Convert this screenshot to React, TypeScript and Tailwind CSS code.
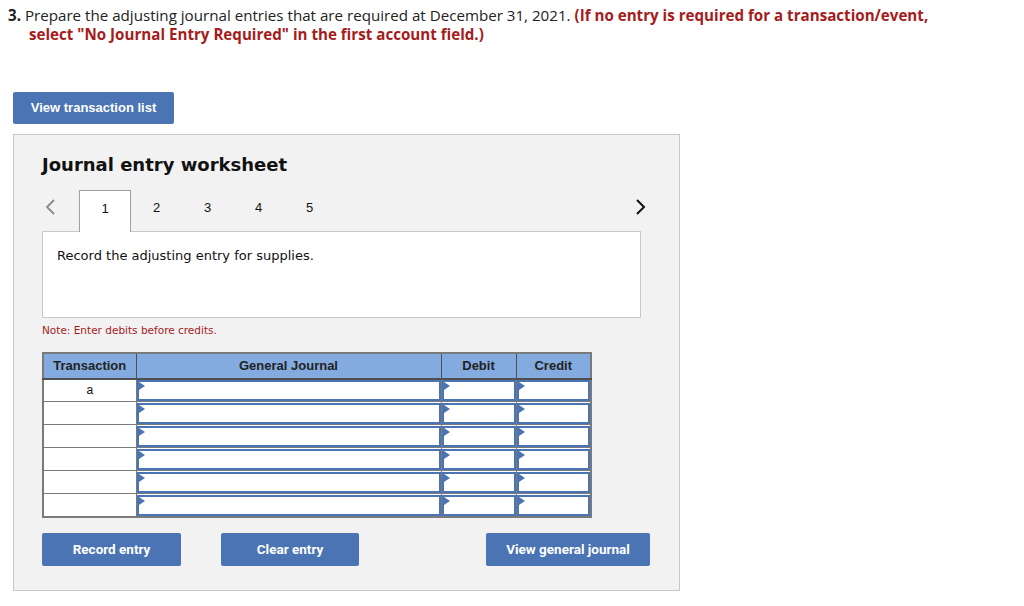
import React from "react";

function Tri() {
  return (
    <span className="absolute left-0 top-0 w-0 h-0 border-t-[4px] border-b-[4px] border-l-[6px] border-t-transparent border-b-transparent border-l-[#4a74b4]" />
  );
}

function InputCell({ w }: { w: string }) {
  return (
    <td className={`${w} p-0 border border-[#7a7a7a] bg-white`}>
      <div className="relative h-[21px] border-2 border-[#4a74b4] bg-white">
        <Tri />
      </div>
    </td>
  );
}

export default function App() {
  const rows = ["a", "", "", "", "", ""];
  return (
    <div className="w-[1024px] h-[606px] bg-white relative overflow-hidden" style={{ fontFamily: "'Open Sans', Lato, sans-serif" }}>
      <div className="pl-[8px] pt-[6px] text-[15.15px] leading-[19px] text-[#222]">
        <span className="font-bold">3.</span>{" "}
        Prepare the adjusting journal entries that are required at December 31, 2021.{" "}
        <span className="font-bold text-[#a51c1c]">(If no entry is required for a transaction/event,</span>
        <br />
        <span className="pl-[21px] font-bold text-[#a51c1c]">select "No Journal Entry Required" in the first account field.)</span>
      </div>

      <div className="pl-[13px] mt-[48px]">
        <button
          className="w-[161px] h-[32px] rounded-[2px] bg-[#4a74b4] text-white text-[13px] font-bold"
          style={{ fontFamily: "'Liberation Sans', Arial, sans-serif" }}
        >
          View transaction list
        </button>
      </div>

      <div
        className="ml-[13px] mt-[10px] w-[667px] h-[457px] bg-[#f2f2f2] border border-[#c8c8c8]"
        style={{ fontFamily: "'DejaVu Sans', Verdana, sans-serif" }}
      >
        <div className="pl-[28px] pt-[19px] text-[18px] font-bold text-[#111] leading-[22px]">Journal entry worksheet</div>

        <div className="flex items-end pl-[28px] mt-[14px] h-[42px] relative">
          <div className="w-[37px] h-[42px] flex items-center justify-start pl-[2px] pb-[8px]">
            <svg width="12" height="18" viewBox="0 0 12 18">
              <path d="M10 2 L3 9 L10 16" fill="none" stroke="#8a8a8a" strokeWidth="1.8" />
            </svg>
          </div>
          <div className="w-[52px] h-[42px] bg-white border border-b-0 border-[#a0a0a0] flex items-center justify-center pb-[6px] text-[13px] text-[#111] relative z-10" style={{ fontFamily: "'Liberation Sans', Arial, sans-serif" }}>1</div>
          {["2", "3", "4", "5"].map((n) => (
            <div key={n} className="w-[51px] h-[42px] flex items-center justify-center pb-[6px] text-[13px] text-[#111]" style={{ fontFamily: "'Liberation Sans', Arial, sans-serif" }}>{n}</div>
          ))}
          <div className="absolute left-[621px] top-[8px]">
            <svg width="12" height="18" viewBox="0 0 12 18">
              <path d="M2 2 L9 9 L2 16" fill="none" stroke="#111" strokeWidth="2" />
            </svg>
          </div>
        </div>

        <div className="ml-[28px] w-[599px] h-[87px] bg-white border border-[#c8c8c8] -mt-px pl-[14px] pt-[14px] text-[13px] text-[#111]">
          Record the adjusting entry for supplies.
        </div>

        <div className="pl-[28px] mt-[5px] text-[10.5px] text-[#a51c1c]">Note: Enter debits before credits.</div>

        <div className="ml-[28px] mt-[13px]" style={{ fontFamily: "'Liberation Sans', Arial, sans-serif" }}>
          <table className="border-collapse border-2 border-[#7a7a7a] w-[549px] table-fixed">
            <thead>
              <tr className="h-[26px] bg-[#84abe0] text-[13px] font-bold text-[#222]">
                <th className="w-[93px] border border-[#4f4f4f] border-b-2 font-bold">Transaction</th>
                <th className="w-[305px] border border-[#4f4f4f] border-b-2 font-bold">General Journal</th>
                <th className="w-[75px] border border-[#4f4f4f] border-b-2 font-bold">Debit</th>
                <th className="w-[75px] border border-[#4f4f4f] border-b-2 font-bold">Credit</th>
              </tr>
            </thead>
            <tbody>
              {rows.map((r, i) => (
                <tr key={i} className="h-[23px]">
                  <td className="w-[93px] border border-[#7a7a7a] bg-white text-center text-[12px] text-[#111] align-top pt-[2px] leading-[16px]">{r}</td>
                  <InputCell w="w-[305px]" />
                  <InputCell w="w-[75px]" />
                  <InputCell w="w-[75px]" />
                </tr>
              ))}
            </tbody>
          </table>
        </div>

        <div className="flex ml-[28px] mt-[15px]" style={{ fontFamily: "Roboto, sans-serif" }}>
          <button className="w-[139px] h-[33px] rounded-[2px] bg-[#4a74b4] text-white text-[13.5px] font-bold">Record entry</button>
          <button className="w-[138px] h-[33px] rounded-[2px] bg-[#4a74b4] text-white text-[13.5px] font-bold ml-[40px]">Clear entry</button>
          <button className="w-[164px] h-[33px] rounded-[2px] bg-[#4a74b4] text-white text-[13.5px] font-bold ml-[127px]">View general journal</button>
        </div>
      </div>
    </div>
  );
}
